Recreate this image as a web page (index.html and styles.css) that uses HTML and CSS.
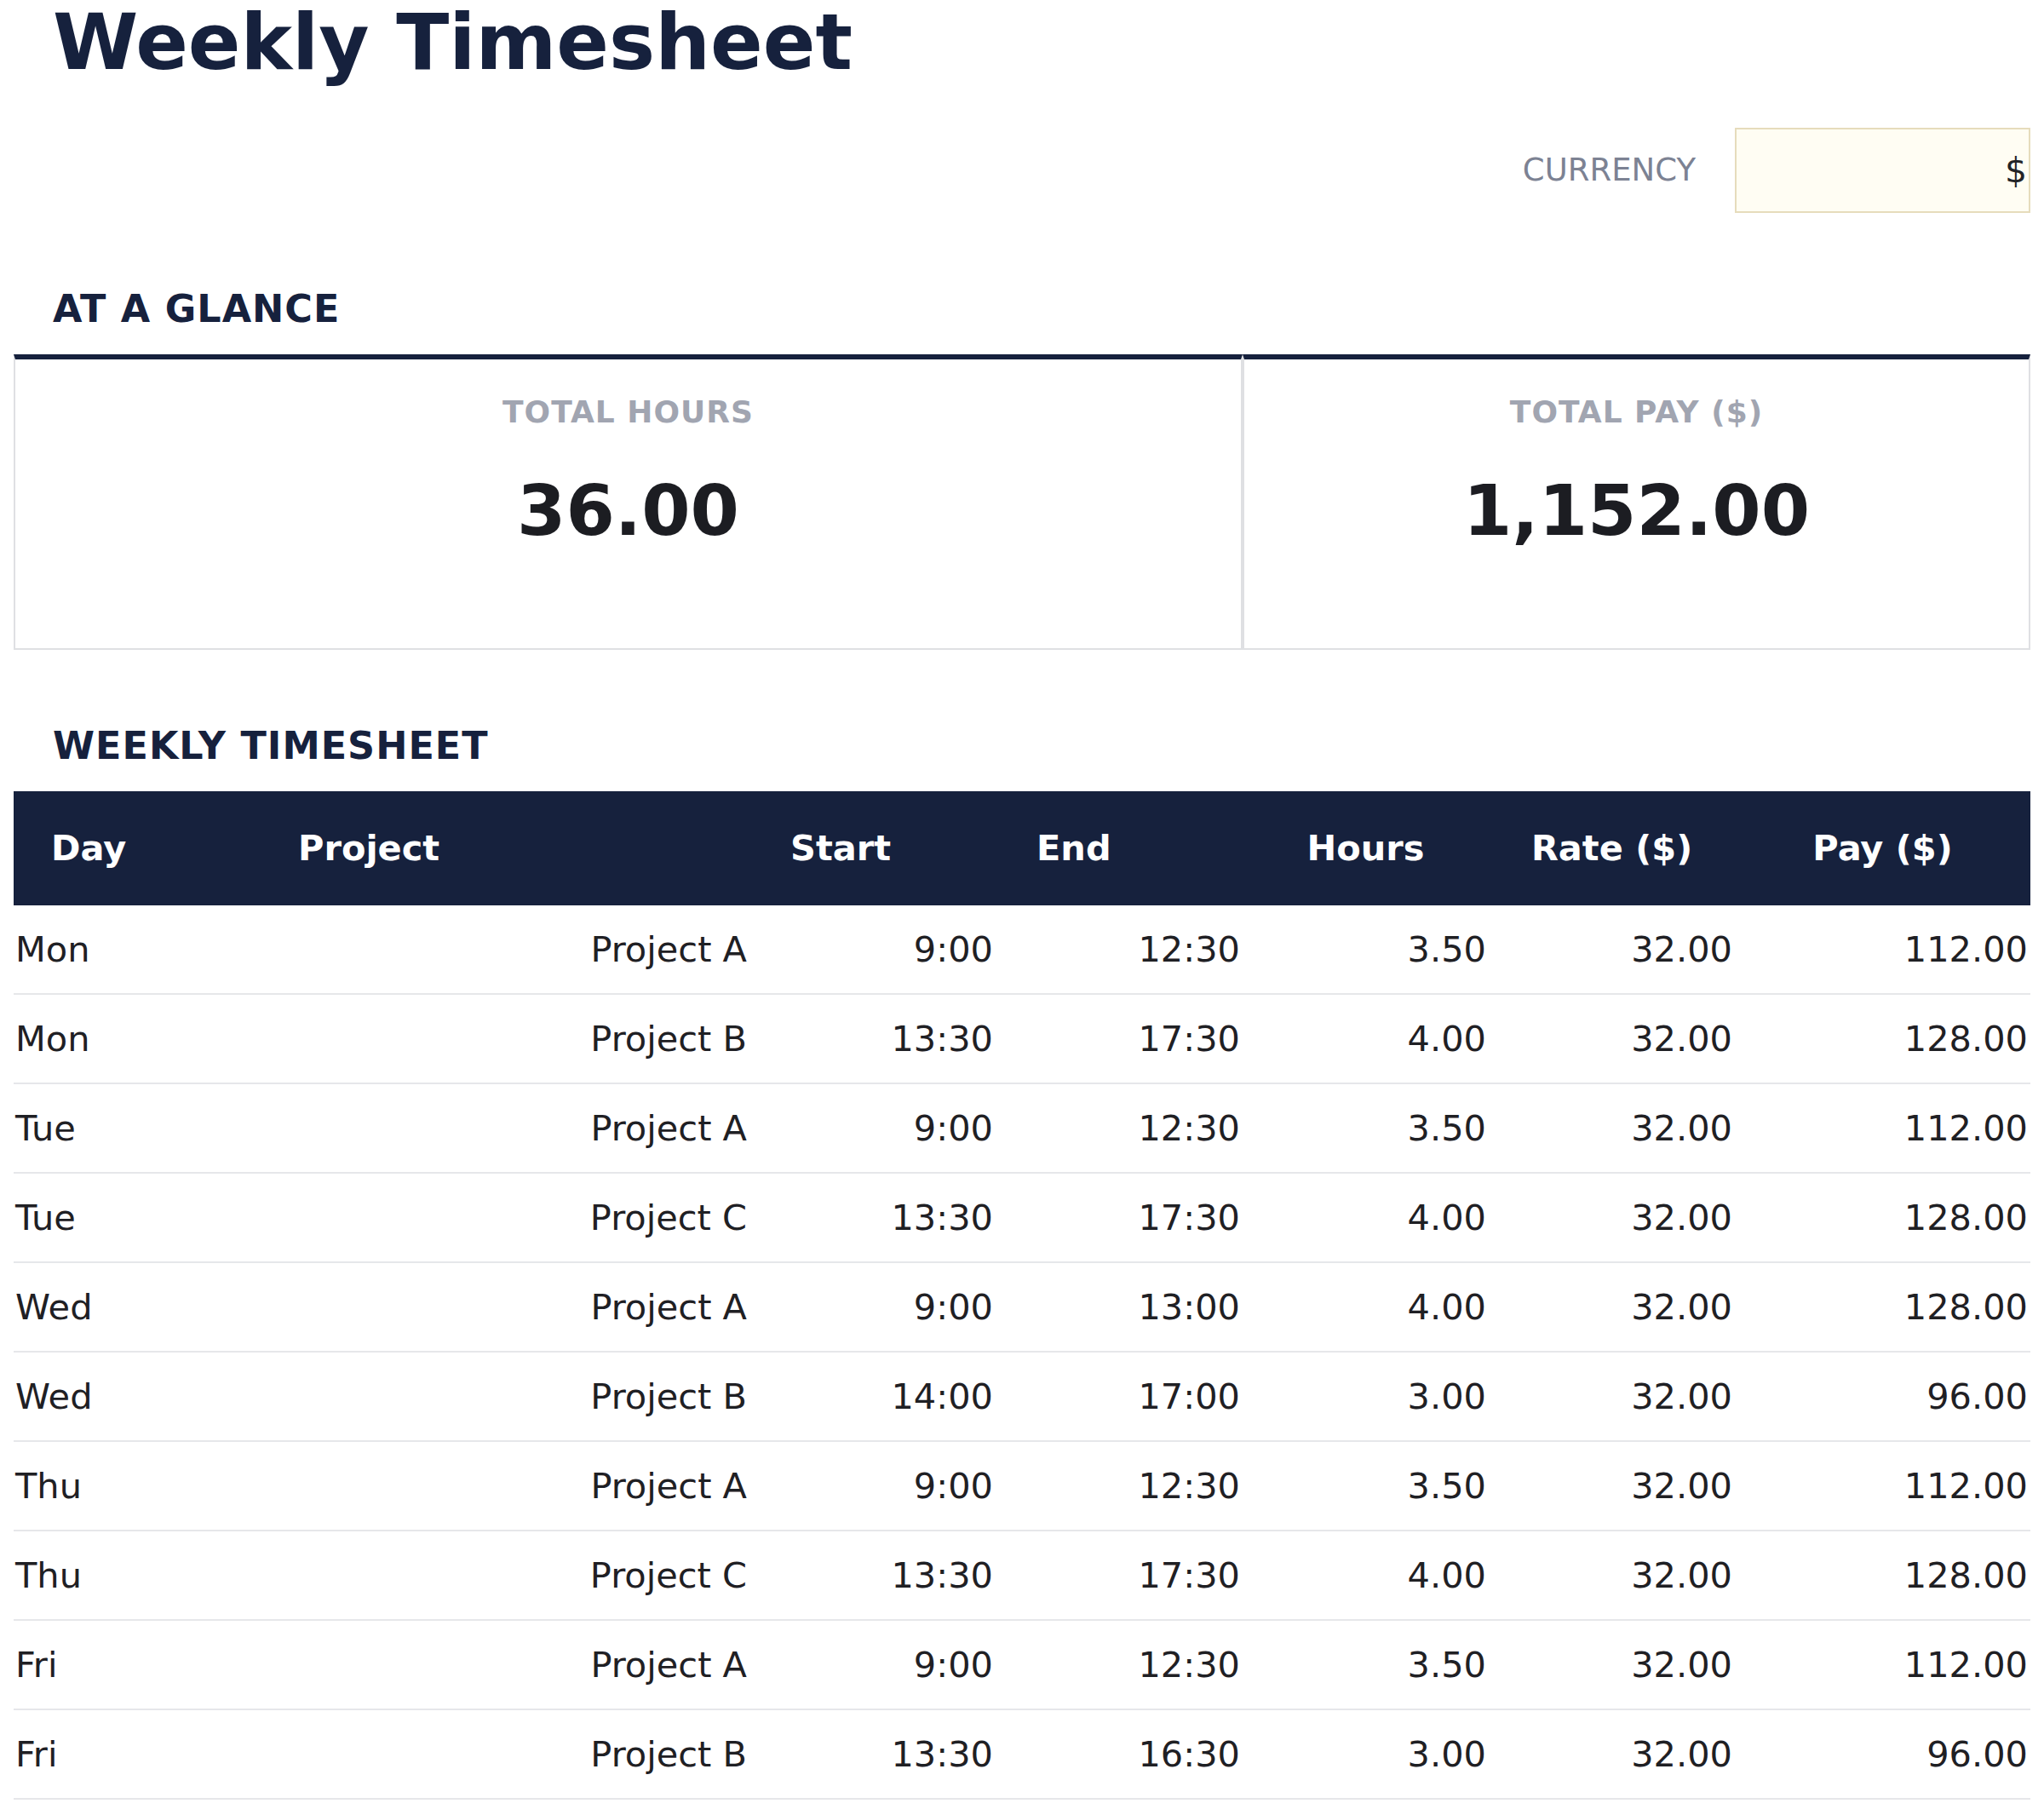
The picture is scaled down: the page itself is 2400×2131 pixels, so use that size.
FILE: index.html
```html
<!DOCTYPE html>
<html lang="en">
<head>
<meta charset="utf-8">
<title>Weekly Timesheet</title>
<link rel="stylesheet" href="styles.css">
</head>
<body>
<div class="page">
  <h1 class="title">Weekly Timesheet</h1>

  <div class="cols currency-row">
    <div class="currency-label">CURRENCY</div>
    <div class="currency-box">$</div>
  </div>

  <h2 class="section">AT A GLANCE</h2>
  <div class="cols glance">
    <div class="card card-left">
      <div class="card-label">TOTAL HOURS</div>
      <div class="card-value">36.00</div>
    </div>
    <div class="card card-right">
      <div class="card-label">TOTAL PAY ($)</div>
      <div class="card-value">1,152.00</div>
    </div>
  </div>

  <h2 class="section">WEEKLY TIMESHEET</h2>
  <div class="sheet">
    <div class="cols head">
      <div class="th th-left">Day</div>
      <div class="th th-left">Project</div>
      <div class="th th-time">Start</div>
      <div class="th th-time">End</div>
      <div class="th th-center">Hours</div>
      <div class="th th-center">Rate ($)</div>
      <div class="th th-center">Pay ($)</div>
    </div>

    <div class="cols row"><div class="td day">Mon</div><div class="td num">Project A</div><div class="td num">9:00</div><div class="td num">12:30</div><div class="td num">3.50</div><div class="td num">32.00</div><div class="td num">112.00</div></div>
    <div class="cols row"><div class="td day">Mon</div><div class="td num">Project B</div><div class="td num">13:30</div><div class="td num">17:30</div><div class="td num">4.00</div><div class="td num">32.00</div><div class="td num">128.00</div></div>
    <div class="cols row"><div class="td day">Tue</div><div class="td num">Project A</div><div class="td num">9:00</div><div class="td num">12:30</div><div class="td num">3.50</div><div class="td num">32.00</div><div class="td num">112.00</div></div>
    <div class="cols row"><div class="td day">Tue</div><div class="td num">Project C</div><div class="td num">13:30</div><div class="td num">17:30</div><div class="td num">4.00</div><div class="td num">32.00</div><div class="td num">128.00</div></div>
    <div class="cols row"><div class="td day">Wed</div><div class="td num">Project A</div><div class="td num">9:00</div><div class="td num">13:00</div><div class="td num">4.00</div><div class="td num">32.00</div><div class="td num">128.00</div></div>
    <div class="cols row"><div class="td day">Wed</div><div class="td num">Project B</div><div class="td num">14:00</div><div class="td num">17:00</div><div class="td num">3.00</div><div class="td num">32.00</div><div class="td num">96.00</div></div>
    <div class="cols row"><div class="td day">Thu</div><div class="td num">Project A</div><div class="td num">9:00</div><div class="td num">12:30</div><div class="td num">3.50</div><div class="td num">32.00</div><div class="td num">112.00</div></div>
    <div class="cols row"><div class="td day">Thu</div><div class="td num">Project C</div><div class="td num">13:30</div><div class="td num">17:30</div><div class="td num">4.00</div><div class="td num">32.00</div><div class="td num">128.00</div></div>
    <div class="cols row"><div class="td day">Fri</div><div class="td num">Project A</div><div class="td num">9:00</div><div class="td num">12:30</div><div class="td num">3.50</div><div class="td num">32.00</div><div class="td num">112.00</div></div>
    <div class="cols row"><div class="td day">Fri</div><div class="td num">Project B</div><div class="td num">13:30</div><div class="td num">16:30</div><div class="td num">3.00</div><div class="td num">32.00</div><div class="td num">96.00</div></div>
  </div>
</div>
</body>
</html>
```

FILE: styles.css
```css
html, body {
  margin: 0;
  padding: 0;
  background: #ffffff;
}

body {
  font-family: "DejaVu Sans", "Noto Sans", sans-serif;
  color: #1f2024;
}

.page {
  padding: 0 16px;
  width: 2368px;
}

.cols {
  display: grid;
  grid-template-columns: 290px 574px 289px 290px 289px 289px 347px;
}

.title {
  margin: 0;
  padding: 4px 0 0 46px;
  font-size: 91px;
  line-height: 92px;
  font-weight: 700;
  color: #16213d;
}

/* currency */
.currency-row {
  margin-top: 54px;
  height: 100px;
  align-items: center;
}

.currency-label {
  grid-column: 6;
  text-align: right;
  padding-right: 46px;
  font-size: 37px;
  line-height: 44px;
  color: #7c8293;
}

.currency-box {
  grid-column: 7;
  box-sizing: border-box;
  height: 100px;
  border: 2px solid #e6dcbc;
  background: #fffdf3;
  display: flex;
  align-items: center;
  justify-content: flex-end;
  padding-right: 2px;
  font-size: 41px;
  color: #222326;
}

/* section headings */
.section {
  margin: 87px 0 0;
  padding-left: 46px;
  font-size: 44.5px;
  line-height: 52px;
  font-weight: 700;
  letter-spacing: 1px;
  color: #16213d;
}

/* glance cards */
.glance {
  margin-top: 27px;
}

.card {
  box-sizing: border-box;
  height: 347px;
  border: 2px solid #dfe0e3;
  border-top: 6px solid #16213d;
  padding-top: 40px;
  text-align: center;
}

.card-left {
  grid-column: 1 / span 4;
}

.card-right {
  grid-column: 5 / span 3;
}

.card-label {
  font-size: 36px;
  line-height: 44px;
  font-weight: 700;
  letter-spacing: 1px;
  color: #a1a5b1;
}

.card-value {
  margin-top: 43px;
  font-size: 82.5px;
  line-height: 100px;
  font-weight: 700;
  color: #1c1d22;
}

/* timesheet */
.sheet {
  margin-top: 27px;
}

.head {
  height: 134px;
  background: #16213d;
  align-items: center;
  color: #ffffff;
  font-size: 41.5px;
  font-weight: 700;
}

.th {
  white-space: nowrap;
  line-height: 48px;
}

.th-left {
  padding-left: 44px;
}

.th-time {
  padding-left: 48px;
}

.th-center {
  text-align: center;
}

.row {
  box-sizing: border-box;
  height: 105px;
  border-bottom: 2px solid #e6e7ea;
  align-items: center;
  font-size: 41.5px;
  color: #1f2024;
}

.td {
  white-space: nowrap;
  line-height: 48px;
}

.day {
  padding-left: 2px;
}

.num {
  text-align: right;
  padding-right: 3px;
}
```
